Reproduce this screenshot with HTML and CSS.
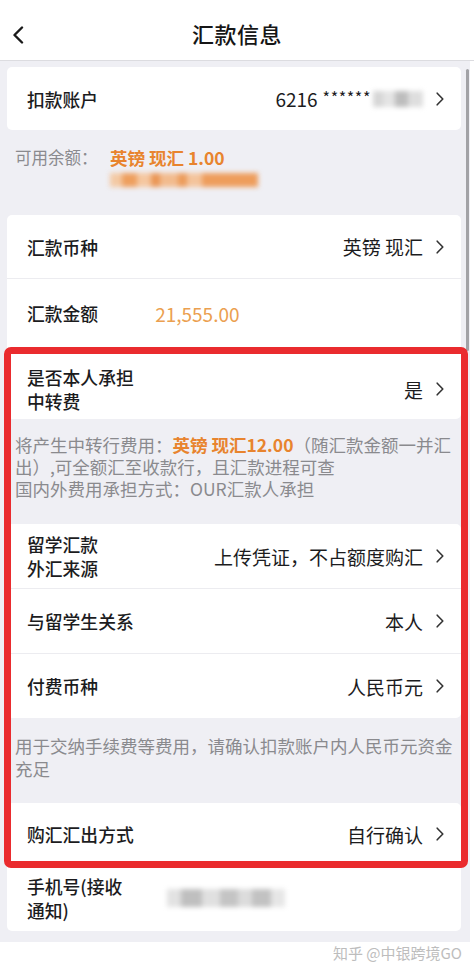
FILE: index.html
```html
<!DOCTYPE html>
<html lang="zh-CN">
<head>
<meta charset="utf-8">
<title>汇款信息</title>
<link rel="stylesheet" href="styles.css">
</head>
<body>
<div class="app">
  <header class="topbar">
    <svg class="back" width="12" height="18" viewBox="0 0 12 18"><path d="M10 1.5 L2.5 9 L10 16.5" fill="none" stroke="#1a1a1a" stroke-width="2.4" stroke-linecap="round" stroke-linejoin="round"/></svg>
    <h1 class="title">汇款信息</h1>
  </header>
  <main class="content">
    <section class="card">
      <div class="row h63">
        <span class="label">扣款账户</span>
        <span class="value">6216 <span class="stars">******</span><span class="blur blur-acct"></span></span>
        <svg class="chev" width="8" height="14" viewBox="0 0 8 14"><path d="M1.2 1.2 L6.8 7 L1.2 12.8" fill="none" stroke="#333" stroke-width="1.6" stroke-linecap="round" stroke-linejoin="round"/></svg>
      </div>
    </section>

    <section class="balance">
      <div class="bal-line"><span class="bal-label">可用余额：</span><span class="bal-value">英镑 现汇 1.00</span></div>
      <div class="bal-line"><span class="bal-label"></span><span class="blur blur-bal"></span></div>
    </section>

    <section class="card">
      <div class="row h64 line">
        <span class="label">汇款币种</span>
        <span class="value">英镑 现汇</span>
        <svg class="chev" width="8" height="14" viewBox="0 0 8 14"><path d="M1.2 1.2 L6.8 7 L1.2 12.8" fill="none" stroke="#333" stroke-width="1.6" stroke-linecap="round" stroke-linejoin="round"/></svg>
      </div>
      <div class="row h68">
        <span class="label">汇款金额</span>
        <span class="amount">21,555.00</span>
      </div>
      <div class="row h72 shift">
        <span class="label">是否本人承担<br>中转费</span>
        <span class="value">是</span>
        <svg class="chev" width="8" height="14" viewBox="0 0 8 14"><path d="M1.2 1.2 L6.8 7 L1.2 12.8" fill="none" stroke="#333" stroke-width="1.6" stroke-linecap="round" stroke-linejoin="round"/></svg>
      </div>
    </section>

    <section class="note note1">
      <p>将产生中转行费用：<b class="orange">英镑 现汇12.00</b>（随汇款金额一并汇出）,可全额汇至收款行，且汇款进程可查</p>
      <p>国内外费用承担方式：OUR汇款人承担</p>
    </section>

    <section class="card">
      <div class="row h65 line">
        <span class="label">留学汇款<br>外汇来源</span>
        <span class="value">上传凭证，不占额度购汇</span>
        <svg class="chev" width="8" height="14" viewBox="0 0 8 14"><path d="M1.2 1.2 L6.8 7 L1.2 12.8" fill="none" stroke="#333" stroke-width="1.6" stroke-linecap="round" stroke-linejoin="round"/></svg>
      </div>
      <div class="row h65 line">
        <span class="label">与留学生关系</span>
        <span class="value">本人</span>
        <svg class="chev" width="8" height="14" viewBox="0 0 8 14"><path d="M1.2 1.2 L6.8 7 L1.2 12.8" fill="none" stroke="#333" stroke-width="1.6" stroke-linecap="round" stroke-linejoin="round"/></svg>
      </div>
      <div class="row h64">
        <span class="label">付费币种</span>
        <span class="value">人民币元</span>
        <svg class="chev" width="8" height="14" viewBox="0 0 8 14"><path d="M1.2 1.2 L6.8 7 L1.2 12.8" fill="none" stroke="#333" stroke-width="1.6" stroke-linecap="round" stroke-linejoin="round"/></svg>
      </div>
    </section>

    <section class="note note2">
      <p>用于交纳手续费等费用，请确认扣款账户内人民币元资金充足</p>
    </section>

    <section class="card">
      <div class="row h62">
        <span class="label">购汇汇出方式</span>
        <span class="value">自行确认</span>
        <svg class="chev" width="8" height="14" viewBox="0 0 8 14"><path d="M1.2 1.2 L6.8 7 L1.2 12.8" fill="none" stroke="#333" stroke-width="1.6" stroke-linecap="round" stroke-linejoin="round"/></svg>
      </div>
      <div class="row h66">
        <span class="label phone">手机号(接收<br>通知)</span>
        <span class="blur blur-phone"></span>
      </div>
    </section>
  </main>
  <footer class="footer">
    <span class="watermark">知乎 @中银跨境GO</span>
  </footer>
  <div class="scroll-thumb"></div>
  <div class="highlight"></div>
</div>
</body>
</html>
```

FILE: styles.css
```css
* { box-sizing: border-box; }
html, body {
  margin: 0;
  padding: 0;
  background: #ffffff;
}
body {
  font-family: "Noto Sans CJK SC", "Noto Sans", sans-serif;
  color: #1c1c1e;
}
.app {
  position: relative;
  width: 474px;
  height: 969px;
  overflow: hidden;
}
.topbar {
  height: 61px;
  background: #ffffff;
  border-bottom: 1px solid #dcdce0;
  display: flex;
  align-items: center;
  justify-content: center;
  position: relative;
}
.back {
  position: absolute;
  left: 12px;
  top: 26px;
}
.title {
  margin: 6px 0 0 0;
  font-size: 22px;
  font-weight: 500;
  color: #161616;
  letter-spacing: 0.5px;
}
.content {
  background: #efeff4;
  width: 470px;
  padding: 6px 9px 11px 7px;
}
.card {
  background: #ffffff;
  border-radius: 5px;
  width: 454px;
}
.row {
  display: flex;
  align-items: center;
  padding: 0 17px 0 20px;
}
.row.line { border-bottom: 1px solid #ececf0; }
.h62 { height: 62px; }
.h63 { height: 63px; }
.h64 { height: 64px; }
.h65 { height: 65px; }
.h66 { height: 66px; }
.h68 { height: 68px; }
.h72 { height: 72px; }
.shift { padding-top: 12px; }
.label {
  font-size: 17.8px;
  font-weight: 500;
  color: #1c1c1e;
  line-height: 24px;
  white-space: nowrap;
}
.value {
  margin-left: auto;
  font-size: 19px;
  color: #1c1c1e;
  white-space: nowrap;
  display: flex;
  align-items: center;
}
.stars {
  font-size: 16px;
  letter-spacing: 0.6px;
  margin-left: 5px;
  position: relative;
  top: -2px;
}
.chev {
  margin-left: 13px;
  flex: none;
}
.amount {
  margin-left: 57px;
  font-size: 19px;
  color: #eba050;
}
.blur { display: inline-block; filter: blur(2.5px); }
.blur-acct {
  width: 50px;
  height: 16px;
  margin-left: 2px;
  background: linear-gradient(90deg, #d6d6d6 0 20%, #e4e4e4 20% 45%, #bdbdbd 45% 70%, #dedede 70% 100%);
}
.balance {
  padding: 16px 0 25px 8px;
}
.bal-line {
  display: flex;
  align-items: center;
  height: 22px;
}
.bal-label {
  width: 95px;
  font-size: 16.5px;
  color: #8a8a8e;
}
.bal-value {
  font-size: 17.5px;
  font-weight: 700;
  color: #e8842e;
}
.blur-bal {
  width: 148px;
  height: 14px;
  margin-top: 2px;
  background: linear-gradient(90deg, #f3c9a4 0 8%, #ee9f5e 8% 18%, #f5c7a0 18% 28%, #ea9656 28% 34%, #f2bb8e 34% 46%, #ec9b5a 46% 52%, #f4c49c 52% 62%, #ee9d5c 62% 100%);
}
.note {
  margin: 0 -9px 0 -7px;
  padding-left: 15px;
  padding-right: 14px;
  font-size: 17.5px;
  line-height: 22px;
  color: #8a8a8e;
}
.note p { margin: 0; }
.note1 { padding-top: 15px; padding-bottom: 24px; }
.note2 { padding-top: 16px; padding-bottom: 23px; line-height: 23px; }
.orange { color: #e8842e; font-weight: 700; }
.phone { width: 140px; }
.blur-phone {
  width: 118px;
  height: 18px;
  background: linear-gradient(90deg, #e2e2e2 0 12%, #bfbfbf 12% 30%, #e0e0e0 30% 45%, #c4c4c4 45% 60%, #dcdcdc 60% 72%, #c2c2c2 72% 88%, #e6e6e6 88% 100%);
}
.footer {
  height: 26px;
  background: #ffffff;
  display: flex;
  justify-content: flex-end;
  align-items: center;
  padding-right: 12px;
}
.watermark {
  font-size: 15px;
  color: #bdbdbd;
  margin-top: -6px;
}
.scroll-thumb {
  position: absolute;
  left: 466px;
  top: 69px;
  width: 3px;
  height: 282px;
  background: #a2a2a6;
  border-radius: 2px;
}
.highlight {
  position: absolute;
  left: 4px;
  top: 347px;
  width: 464px;
  height: 521px;
  border: 7px solid #ea2b2e;
  border-radius: 7px;
  pointer-events: none;
}
```
